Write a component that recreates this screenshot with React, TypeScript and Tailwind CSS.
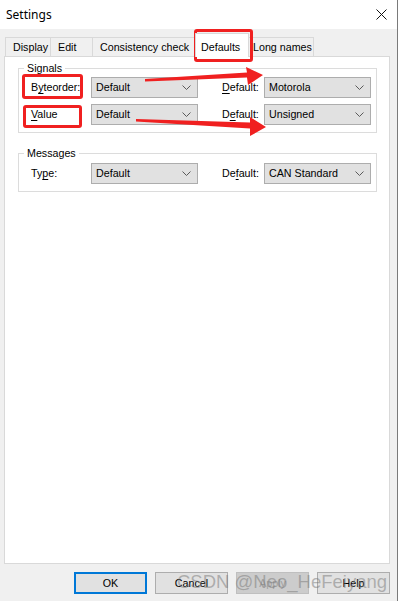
import React from "react";

const font = { fontFamily: '"Liberation Sans", Arial, sans-serif' };

function Chevron() {
    return (
        <svg width="9" height="5" viewBox="0 0 9 5" className="shrink-0">
            <path d="M0.5 0.5 L4.5 4.5 L8.5 0.5" fill="none" stroke="#5a5a5a" strokeWidth="1" />
        </svg>
    );
}

function Combo({ value }: { value: string }) {
    return (
        <div className="flex h-[21px] w-[107px] shrink-0 items-center justify-between border border-[#adadad] bg-[#e1e1e1] pl-[4px] pr-[6px]">
            <span>{value}</span>
            <Chevron />
        </div>
    );
}

// label with an underlined access key
function Accel({ pre, k, post }: { pre?: string; k: string; post: string }) {
    return (
        <span>
            {pre}
            <span className="underline underline-offset-[2px]">{k}</span>
            {post}
        </span>
    );
}

interface RowProps {
    label: React.ReactNode;
    value: string;
    defLabel: React.ReactNode;
    defValue: string;
}

function Row({ label, value, defLabel, defValue }: RowProps) {
    return (
        <div className="flex items-center">
            <div className="w-[60px] shrink-0">{label}</div>
            <Combo value={value} />
            <div className="ml-[24px] w-[42px] shrink-0">{defLabel}</div>
            <Combo value={defValue} />
        </div>
    );
}

function Group({ title, children, className }: { title: string; children: React.ReactNode; className?: string }) {
    return (
        <div className={`relative ml-[13px] w-[359px] border border-[#dcdcdc] pl-[12px] ${className ?? ""}`}>
            <span className="absolute -top-[7px] left-[5px] bg-white px-[3px] leading-[13px]">{title}</span>
            {children}
        </div>
    );
}

const tabs = [
    { name: "Display", w: "w-[45px] pl-[7px]" },
    { name: "Edit", w: "w-[42px] pl-[7px]" },
    { name: "Consistency check", w: "w-[103px] pl-[7px]" },
];

export default function App() {
    return (
        <div
            className="relative flex h-[601px] w-[398px] flex-col overflow-hidden whitespace-nowrap border-r border-[#7a7a7a] bg-[#f0f0f0] text-[10.7px] text-black"
            style={font}
        >
            {/* title bar */}
            <div className="flex h-[29px] shrink-0 items-center justify-between bg-white pl-[6px] pr-[10px]">
                <span className="text-[12px]" style={{ fontFamily: '"Noto Sans", "Liberation Sans", sans-serif' }}>
                    Settings
                </span>
                <svg width="11" height="11" viewBox="0 0 11 11">
                    <path d="M0.5 0.5 L10.5 10.5 M10.5 0.5 L0.5 10.5" stroke="#111" strokeWidth="1" />
                </svg>
            </div>

            <div className="mt-[4px] flex flex-col pl-[4px]">
                {/* tab strip */}
                <div className="flex items-end pl-[1px]">
                    {tabs.map((t) => (
                        <div
                            key={t.name}
                            className={`flex h-[19px] items-center border-l border-t border-[#d9d9d9] bg-[#f0f0f0] ${t.w}`}
                        >
                            {t.name}
                        </div>
                    ))}
                    <div className="relative z-10 -mb-px flex h-[24px] w-[54px] items-start border border-b-0 border-[#d9d9d9] bg-white pl-[5px] pt-[5px]">
                        Defaults
                    </div>
                    <div className="flex h-[19px] w-[65px] items-center border-r border-t border-[#d9d9d9] bg-[#f0f0f0] pl-[4px]">
                        Long names
                    </div>
                </div>

                {/* tab page */}
                <div className="flex h-[508px] w-[386px] flex-col border border-[#d9d9d9] bg-white pt-[11px]">
                    <Group title="Signals" className="flex flex-col gap-[6px] pb-[7px] pt-[8px]">
                        <Row
                            label={<Accel pre="B" k="y" post="teorder:" />}
                            value="Default"
                            defLabel={<Accel k="D" post="efault:" />}
                            defValue="Motorola"
                        />
                        <Row
                            label={<Accel k="V" post="alue" />}
                            value="Default"
                            defLabel={<Accel pre="D" k="e" post="fault:" />}
                            defValue="Unsigned"
                        />
                    </Group>
                    <Group title="Messages" className="mt-[20px] pb-[7px] pt-[9px]">
                        <Row
                            label={<Accel pre="Ty" k="p" post="e:" />}
                            value="Default"
                            defLabel={<Accel pre="De" k="f" post="ault:" />}
                            defValue="CAN Standard"
                        />
                    </Group>
                </div>

                {/* dialog buttons */}
                <div className="mt-[8px] flex w-[386px] justify-end gap-[8px]">
                    <button className="flex h-[22px] w-[73px] items-center justify-center border-2 border-[#0078d7] bg-[#e1e1e1]">
                        OK
                    </button>
                    <button className="flex h-[22px] w-[73px] items-center justify-center border border-[#adadad] bg-[#e1e1e1]">
                        Cancel
                    </button>
                    <button className="flex h-[22px] w-[73px] items-center justify-center border border-[#bfbfbf] bg-[#cccccc] text-[#a0a0a0]">
                        Apply
                    </button>
                    <button className="flex h-[22px] w-[73px] items-center justify-center border border-[#adadad] bg-[#e1e1e1]">
                        Help
                    </button>
                </div>
            </div>

            {/* red annotations */}
            <div className="pointer-events-none absolute left-[194px] top-[29px] h-[33px] w-[59px] rounded-[3px] border-[3px] border-[#f02020]" />
            <div className="pointer-events-none absolute left-[22px] top-[74px] h-[25px] w-[61px] rounded-[3px] border-[3px] border-[#f02020]" />
            <div className="pointer-events-none absolute left-[23px] top-[105px] h-[23px] w-[59px] rounded-[3px] border-[3px] border-[#f02020]" />
            <svg className="pointer-events-none absolute left-0 top-0" width="398" height="601">
                <polygon points="145,79 247,72.5 246,67 263,75 248,85 247,77.5 145,81.5" fill="#f02020" />
                <polygon points="136,119 250,122.5 250,117 266,127 250,136 250,128.5 136,121.5" fill="#f02020" />
            </svg>

            {/* watermark */}
            <span className="pointer-events-none absolute left-[177px] top-[570px] whitespace-nowrap text-[18.5px] leading-[24px] text-[rgba(120,120,120,0.5)]">
                CSDN @Neo_HeFeiyang
            </span>
        </div>
    );
}
